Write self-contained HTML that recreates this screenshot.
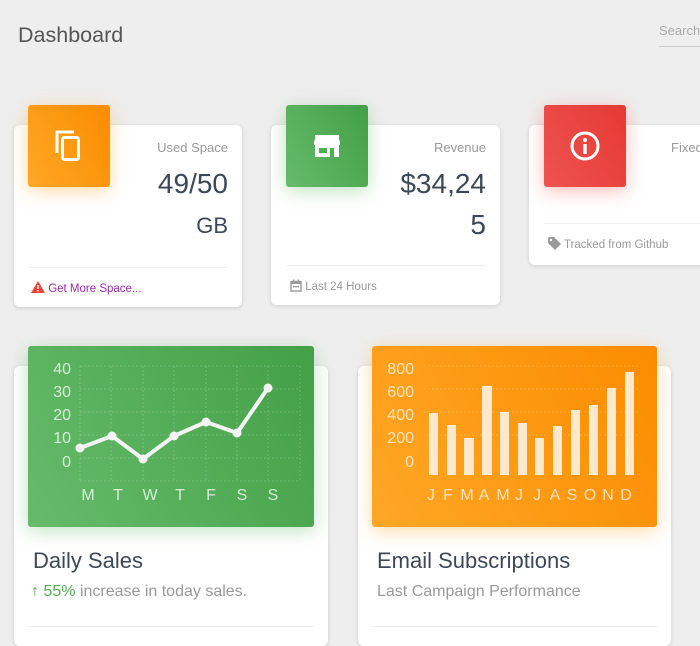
<!DOCTYPE html>
<html><head><meta charset="utf-8"><style>
*{box-sizing:border-box;margin:0;padding:0}
body{width:700px;height:630px;overflow:hidden;background:#eeeeee;font-family:"Liberation Sans",sans-serif;position:relative}
.a{position:absolute}
.card{position:absolute;background:#fff;border-radius:6px;box-shadow:0 1px 4px rgba(0,0,0,.14)}
.ib{position:absolute;width:82px;height:82px;border-radius:3px;display:flex;align-items:center;justify-content:center}
.or{background:linear-gradient(60deg,#ffa726,#fb8c00);box-shadow:0 4px 18px rgba(255,152,0,.35)}
.gr{background:linear-gradient(60deg,#66bb6a,#43a047);box-shadow:0 4px 18px rgba(76,175,80,.35)}
.rd{background:linear-gradient(60deg,#ef5350,#e53935);box-shadow:0 4px 18px rgba(244,67,54,.35)}
.cat{font-size:13px;color:#999;text-align:right}
.val{font-size:28px;color:#3c4858;text-align:right;font-weight:300}
.hr{position:absolute;height:1px;background:#eee}
.ft{font-size:11.5px;color:#999}
</style></head><body>
<div class="a" style="left:18px;top:23px;font-size:21.5px;color:#555;font-weight:300">Dashboard</div>
<div class="a" style="left:659px;top:23px;font-size:13px;color:#aaa">Search</div>
<div class="a" style="left:659px;top:46px;width:41px;height:1px;background:#ccc"></div>

<div class="card" style="left:14px;top:125px;width:228px;height:182px"></div>
<div class="ib or" style="left:28px;top:105px"><svg width="30" height="34" viewBox="0 0 30 34"><path d="M3 24V3h17" fill="none" stroke="#fff" stroke-width="3"/><rect x="8.5" y="8.5" width="16" height="22" rx="2" fill="none" stroke="#fff" stroke-width="3"/></svg></div>
<div class="a cat" style="left:100px;top:140px;width:128px">Used Space</div>
<div class="a val" style="left:100px;top:168px;width:128px">49/50</div>
<div class="a val" style="left:100px;top:213px;width:128px;font-size:22px;font-weight:400">GB</div>
<div class="hr" style="left:28px;top:267px;width:200px"></div>
<div class="a" style="left:31px;top:281px;font-size:11.5px;color:#9c27b0"><svg width="14" height="12" viewBox="0 0 14 12" style="vertical-align:-1px"><path d="M7 0L14 12H0z" fill="#f44336"/><rect x="6.3" y="4" width="1.4" height="4" fill="#fff"/><rect x="6.3" y="9" width="1.4" height="1.4" fill="#fff"/></svg> Get More Space...</div>

<div class="card" style="left:271px;top:125px;width:229px;height:180px"></div>
<div class="ib gr" style="left:286px;top:105px"><svg width="28" height="24" viewBox="0 0 28 24"><rect x="2" y="1" width="24" height="4" fill="#fff"/><path d="M1 8l1-3h24l1 3v3H1z" fill="#fff"/><rect x="2" y="11" width="24" height="12" fill="#fff"/><rect x="6" y="14" width="8" height="5" fill="#4caf50"/><rect x="17" y="14" width="4" height="9" fill="#4caf50"/></svg></div>
<div class="a cat" style="left:360px;top:140px;width:126px">Revenue</div>
<div class="a val" style="left:360px;top:168px;width:126px">$34,24</div>
<div class="a val" style="left:360px;top:209px;width:126px">5</div>
<div class="hr" style="left:286px;top:265px;width:200px"></div>
<div class="a ft" style="left:290px;top:279px"><svg width="12" height="13" viewBox="0 0 12 13" style="vertical-align:-2px"><rect x="1" y="2.5" width="10" height="9.5" fill="none" stroke="#999" stroke-width="1.4"/><rect x="1" y="2.5" width="10" height="2.5" fill="#999"/><rect x="3" y="0.5" width="1.3" height="3" fill="#999"/><rect x="7.7" y="0.5" width="1.3" height="3" fill="#999"/><rect x="3" y="7" width="6" height="1.3" fill="#999"/></svg> Last 24 Hours</div>

<div class="card" style="left:529px;top:125px;width:190px;height:140px"></div>
<div class="ib rd" style="left:544px;top:105px"><svg width="32" height="32" viewBox="0 0 32 32"><circle cx="16" cy="16" r="13" fill="none" stroke="#fff" stroke-width="3"/><rect x="14.3" y="14" width="3.4" height="10" fill="#fff"/><circle cx="16" cy="10" r="2" fill="#fff"/></svg></div>
<div class="a cat" style="left:671px;top:140px;text-align:left">Fixed</div>
<div class="hr" style="left:544px;top:223px;width:156px"></div>
<div class="a ft" style="left:548px;top:237px"><svg width="13" height="13" viewBox="0 0 13 13" style="vertical-align:-2px"><path d="M0 1v5l7 7 6-6-7-7H1z" fill="#999"/><circle cx="3" cy="3" r="1.2" fill="#fff"/></svg> Tracked from Github</div>

<div class="card" style="left:14px;top:366px;width:314px;height:280px"></div>
<div class="a gr" style="left:28px;top:346px;width:286px;height:181px;border-radius:3px"></div>
<svg class="a" style="left:28px;top:346px" width="286" height="181" viewBox="28 346 286 181">
<g stroke="rgba(255,255,255,.2)" stroke-dasharray="2 2" stroke-width="1">
<line x1="80" y1="366" x2="300" y2="366"/><line x1="80" y1="389" x2="300" y2="389"/><line x1="80" y1="412" x2="300" y2="412"/><line x1="80" y1="435" x2="300" y2="435"/><line x1="80" y1="458" x2="300" y2="458"/><line x1="80" y1="481" x2="300" y2="481"/>
<line x1="80" y1="366" x2="80" y2="481"/><line x1="111" y1="366" x2="111" y2="481"/><line x1="143" y1="366" x2="143" y2="481"/><line x1="174" y1="366" x2="174" y2="481"/><line x1="206" y1="366" x2="206" y2="481"/><line x1="237" y1="366" x2="237" y2="481"/><line x1="268" y1="366" x2="268" y2="481"/><line x1="300" y1="366" x2="300" y2="481"/>
</g>
<g fill="rgba(255,255,255,.75)" font-size="16" font-family="Liberation Sans" text-anchor="end">
<text x="71" y="374">40</text><text x="71" y="397">30</text><text x="71" y="420">20</text><text x="71" y="443">10</text><text x="71" y="467">0</text>
</g>
<g fill="rgba(255,255,255,.75)" font-size="16" font-family="Liberation Sans" text-anchor="middle">
<text x="88" y="500">M</text><text x="118" y="500">T</text><text x="150" y="500">W</text><text x="180" y="500">T</text><text x="211" y="500">F</text><text x="242" y="500">S</text><text x="273" y="500">S</text>
</g>
<polyline points="80,448 112,436 143,459 174,436 206,422 237,433 268,388" fill="none" stroke="#f4f4f4" stroke-width="4" stroke-linejoin="round"/>
<g fill="#f4f4f4"><circle cx="80" cy="448" r="4.5"/><circle cx="112" cy="436" r="4.5"/><circle cx="143" cy="459" r="4.5"/><circle cx="174" cy="436" r="4.5"/><circle cx="206" cy="422" r="4.5"/><circle cx="237" cy="433" r="4.5"/><circle cx="268" cy="388" r="4.5"/></g>
</svg>
<div class="a" style="left:33px;top:548px;font-size:22px;color:#3c4858;font-weight:300">Daily Sales</div>
<div class="a" style="left:31px;top:583px;font-size:16px;color:#999"><span style="color:#4caf50">&#x2191; 55%</span> increase in today sales.</div>
<div class="hr" style="left:28px;top:626px;width:286px"></div>

<div class="card" style="left:358px;top:366px;width:313px;height:280px"></div>
<div class="a or" style="left:372px;top:346px;width:285px;height:181px;border-radius:3px"></div>
<svg class="a" style="left:372px;top:346px" width="285" height="181" viewBox="372 346 285 181">
<g stroke="rgba(255,255,255,.2)" stroke-dasharray="2 2"><line x1="424" y1="366" x2="640" y2="366"/><line x1="424" y1="389" x2="640" y2="389"/><line x1="424" y1="412" x2="640" y2="412"/><line x1="424" y1="435" x2="640" y2="435"/></g>
<g fill="rgba(255,255,255,.7)" font-size="16" font-family="Liberation Sans" text-anchor="end">
<text x="414" y="374">800</text><text x="414" y="397">600</text><text x="414" y="420">400</text><text x="414" y="443">200</text><text x="414" y="467">0</text>
</g>
<g fill="#ffe9cc">
<rect x="429" y="413" width="9" height="62"/><rect x="447" y="425" width="9" height="50"/><rect x="464" y="438" width="10" height="37"/><rect x="482" y="386" width="10" height="89"/><rect x="500" y="412" width="9" height="63"/><rect x="518" y="423" width="9" height="52"/><rect x="535" y="438" width="9" height="37"/><rect x="553" y="426" width="9" height="49"/><rect x="571" y="410" width="9" height="65"/><rect x="589" y="405" width="9" height="70"/><rect x="607" y="388" width="9" height="87"/><rect x="625" y="372" width="9" height="103"/>
</g>
<g fill="rgba(255,255,255,.7)" font-size="16" font-family="Liberation Sans" text-anchor="middle">
<text x="431" y="500">J</text><text x="448" y="500">F</text><text x="467" y="500">M</text><text x="484" y="500">A</text><text x="503" y="500">M</text><text x="519" y="500">J</text><text x="537" y="500">J</text><text x="555" y="500">A</text><text x="572" y="500">S</text><text x="590" y="500">O</text><text x="608" y="500">N</text><text x="626" y="500">D</text>
</g>
</svg>
<div class="a" style="left:377px;top:548px;font-size:22px;color:#3c4858;font-weight:300">Email Subscriptions</div>
<div class="a" style="left:377px;top:583px;font-size:16px;color:#999">Last Campaign Performance</div>
<div class="hr" style="left:372px;top:626px;width:285px"></div>
</body></html>
